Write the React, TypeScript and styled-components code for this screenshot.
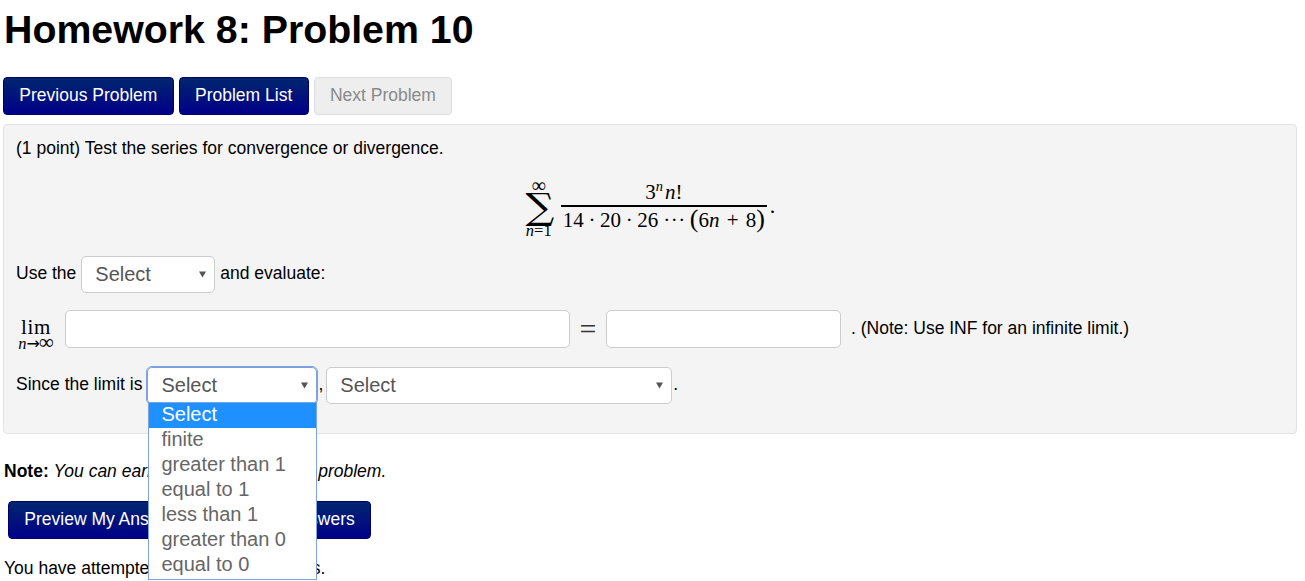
import React from 'react';
import styled, { createGlobalStyle } from 'styled-components';

const GlobalStyle = createGlobalStyle`
  html, body {
    margin: 0;
    padding: 0;
    background: #fff;
    overflow: hidden;
  }
  body {
    font-family: 'Liberation Sans', Arial, sans-serif;
    font-size: 17.5px;
    line-height: 25px;
    color: #000;
  }
`;

const Page = styled.div`
  height: 581px;
  padding: 0 8px 0 3px;
  box-sizing: border-box;
  overflow: hidden;
`;

const Title = styled.h1`
  margin: 0;
  padding: 7px 0 0 1px;
  height: 77px;
  box-sizing: border-box;
  font-size: 39.3px;
  line-height: 45px;
  font-weight: 700;
`;

const NavRow = styled.div`
  display: flex;
  gap: 5px;
  margin-bottom: 9px;
`;

const Button = styled.button<{ $disabled?: boolean }>`
  height: 38px;
  padding: 0 15.3px 2px;
  box-sizing: border-box;
  border-radius: 4px;
  border: 1px solid ${(p) => (p.$disabled ? '#ddd' : '#00006a')};
  background: ${(p) => (p.$disabled ? '#eee' : 'linear-gradient(#00266e, #000088)')};
  color: ${(p) => (p.$disabled ? '#8a8a8a' : '#fff')};
  font: inherit;
`;

const Panel = styled.div`
  height: 310px;
  box-sizing: border-box;
  padding: 11px 12px;
  background: #f4f4f4;
  border: 1px solid #e3e3e3;
  border-radius: 4px;
`;

const Display = styled.div`
  display: flex;
  justify-content: center;
  align-items: flex-start;
  height: 85px;
  margin-top: 9px;
  font-family: 'Liberation Serif', 'DejaVu Serif', serif;
  font-size: 21px;
  line-height: 1;
`;

const SumBlock = styled.div`
  display: flex;
  flex-direction: column;
  align-items: center;
  width: 28px;
  margin: 10px 8px 0 0;
`;

const SumLimit = styled.span<{ $size: number }>`
  font-size: ${(p) => p.$size}px;
  line-height: 10px;
  height: 10px;
  white-space: nowrap;
`;

const SumSign = styled.span`
  margin-left: 3px;
  font-family: 'DejaVu Serif', serif;
  font-size: 36px;
  line-height: 34px;
  height: 36px;
  transform: scaleX(1.12);
`;

const Fraction = styled.div`
  display: flex;
  flex-direction: column;
  align-items: stretch;
  width: 206px;
  margin-top: 9px;
`;

const Numerator = styled.div`
  height: 28px;
  box-sizing: border-box;
  text-align: center;
  border-bottom: 2px solid #000;
  font-size: 21px;
  line-height: 26px;
`;

const Denominator = styled.div`
  display: flex;
  align-items: baseline;
  padding: 1px 0 0 2px;
  font-size: 21px;
  line-height: 24px;
  word-spacing: -0.6px;
  white-space: pre;
`;

const Dots = styled.span`
  margin: 0 4px 0 5px;
  letter-spacing: 0.5px;
`;

const ParenGroup = styled.span`
  word-spacing: 2px;
`;

const Paren = styled.span`
  font-size: 26px;
  line-height: 0;
`;

const Sup = styled.sup`
  font-size: 14.5px;
  line-height: 0;
  font-style: italic;
  margin-right: 2px;
`;

const Period = styled.span`
  margin: 25px 0 0 3px;
  font-size: 22px;
`;

const Row = styled.div<{ $top: number }>`
  display: flex;
  align-items: center;
  gap: 5px;
  margin-top: ${(p) => p.$top}px;
  white-space: nowrap;
`;

const RowText = styled.span<{ $lift?: number }>`
  padding-bottom: ${(p) => p.$lift ?? 2}px;
`;

const SelectWrap = styled.div`
  position: relative;
  display: flex;
`;

const Select = styled.select<{ $width: number; $focused?: boolean }>`
  appearance: none;
  width: ${(p) => p.$width}px;
  height: 37px;
  box-sizing: border-box;
  padding: 0 20px 2px 13px;
  border: 1px solid ${(p) => (p.$focused ? '#7da2e0' : '#ccc')};
  outline: ${(p) => (p.$focused ? '1px solid #7da2e0' : 'none')};
  border-radius: 5px;
  background-color: #fff;
  color: #555;
  font-family: inherit;
  font-size: 20px;
`;

const Caret = styled.svg`
  position: absolute;
  top: 15px;
  right: 9px;
  width: 7px;
  height: 7px;
  pointer-events: none;
`;

const TextInput = styled.input<{ $width: number }>`
  width: ${(p) => p.$width}px;
  height: 38px;
  box-sizing: border-box;
  border: 1px solid #ccc;
  border-radius: 5px;
  background: #fff;
`;

const Limit = styled.div`
  display: flex;
  flex-direction: column;
  align-items: center;
  width: 40px;
  height: 38px;
  box-sizing: border-box;
  padding-top: 8px;
  margin-right: 4px;
  font-family: 'Liberation Serif', 'DejaVu Serif', serif;
`;

const LimitName = styled.span`
  font-size: 21px;
  line-height: 18px;
  letter-spacing: 0.6px;
`;

const LimitSub = styled.span`
  display: flex;
  align-items: baseline;
  font-size: 16.5px;
  line-height: 12px;
  white-space: nowrap;
`;

const Arrow = styled.span`
  font-family: 'DejaVu Sans', sans-serif;
  font-size: 16px;
  letter-spacing: -1px;
`;

const Infinity = styled.span`
  font-size: 21px;
`;

const Equals = styled.span`
  width: 26px;
  text-align: center;
  font-family: 'Liberation Serif', serif;
  font-size: 30px;
  line-height: 1;
  color: #333;
`;

const InlineNote = styled(RowText)`
  margin-left: 5px;
`;

const Comma = styled(RowText)`
  margin: 0 -2px 0 -4px;
`;

const DropList = styled.ul`
  position: absolute;
  top: 35px;
  left: 1px;
  z-index: 5;
  width: 169px;
  margin: 0;
  padding: 0 0 1px;
  box-sizing: border-box;
  list-style: none;
  background: #fff;
  border: 1px solid #7da2e0;
  font-size: 20px;
`;

const DropItem = styled.li<{ $active?: boolean }>`
  height: 25px;
  padding-left: 12px;
  line-height: 23px;
  background: ${(p) => (p.$active ? '#1e90ff' : 'transparent')};
  color: ${(p) => (p.$active ? '#fff' : '#666')};
`;

const Note = styled.p`
  margin: 25px 0 0 1px;
  height: 25px;
`;

const ActionRow = styled.div`
  display: flex;
  gap: 11px;
  margin: 17px 0 0 5px;
`;

const Attempts = styled.p`
  margin: 17px 0 0 1px;
`;

const options = ['Select', 'finite', 'greater than 1', 'equal to 1', 'less than 1', 'greater than 0', 'equal to 0'];

function DownCaret() {
  return (
    <Caret viewBox="0 0 7 7">
      <path d="M0 0.5h7L3.5 6.5z" fill="#555" />
    </Caret>
  );
}

export default function App() {
  return (
    <Page>
      <GlobalStyle />
      <Title>Homework 8: Problem 10</Title>
      <NavRow>
        <Button>Previous Problem</Button>
        <Button>Problem List</Button>
        <Button $disabled>Next Problem</Button>
      </NavRow>
      <Panel>
        <div>(1 point) Test the series for convergence or divergence.</div>
        <Display>
          <SumBlock>
            <SumLimit $size={20}>∞</SumLimit>
            <SumSign>∑</SumSign>
            <SumLimit $size={16.5}>
              <i>n</i>=1
            </SumLimit>
          </SumBlock>
          <Fraction>
            <Numerator>
              3<Sup>n</Sup>
              <i>n</i>!
            </Numerator>
            <Denominator>
              14 · 20 · 26
              <Dots>···</Dots>
              <ParenGroup>
                <Paren>(</Paren>6<i>n</i> + 8<Paren>)</Paren>
              </ParenGroup>
            </Denominator>
          </Fraction>
          <Period>.</Period>
        </Display>
        <Row $top={1}>
          <RowText>Use the</RowText>
          <SelectWrap>
            <Select $width={134}>
              <option>Select</option>
            </Select>
            <DownCaret />
          </SelectWrap>
          <RowText>and evaluate:</RowText>
        </Row>
        <Row $top={17}>
          <Limit>
            <LimitName>lim</LimitName>
            <LimitSub>
              <i>n</i>
              <Arrow>→</Arrow>
              <Infinity>∞</Infinity>
            </LimitSub>
          </Limit>
          <TextInput $width={505} />
          <Equals>=</Equals>
          <TextInput $width={235} />
          <InlineNote>. (Note: Use INF for an infinite limit.)</InlineNote>
        </Row>
        <Row $top={19}>
          <RowText>Since the limit is</RowText>
          <SelectWrap>
            <Select $width={170} $focused>
              {options.map((o) => (
                <option key={o}>{o}</option>
              ))}
            </Select>
            <DownCaret />
            <DropList>
              {options.map((o, i) => (
                <DropItem key={o} $active={i === 0}>
                  {o}
                </DropItem>
              ))}
            </DropList>
          </SelectWrap>
          <Comma>,</Comma>
          <SelectWrap>
            <Select $width={346}>
              <option>Select</option>
            </Select>
            <DownCaret />
          </SelectWrap>
          <Comma>.</Comma>
        </Row>
      </Panel>
      <Note>
        <b>Note:</b> <i>You can earn partial credit on this problem.</i>
      </Note>
      <ActionRow>
        <Button>Preview My Answers</Button>
        <Button>Submit Answers</Button>
      </ActionRow>
      <Attempts>You have attempted this problem 0 times.</Attempts>
    </Page>
  );
}
